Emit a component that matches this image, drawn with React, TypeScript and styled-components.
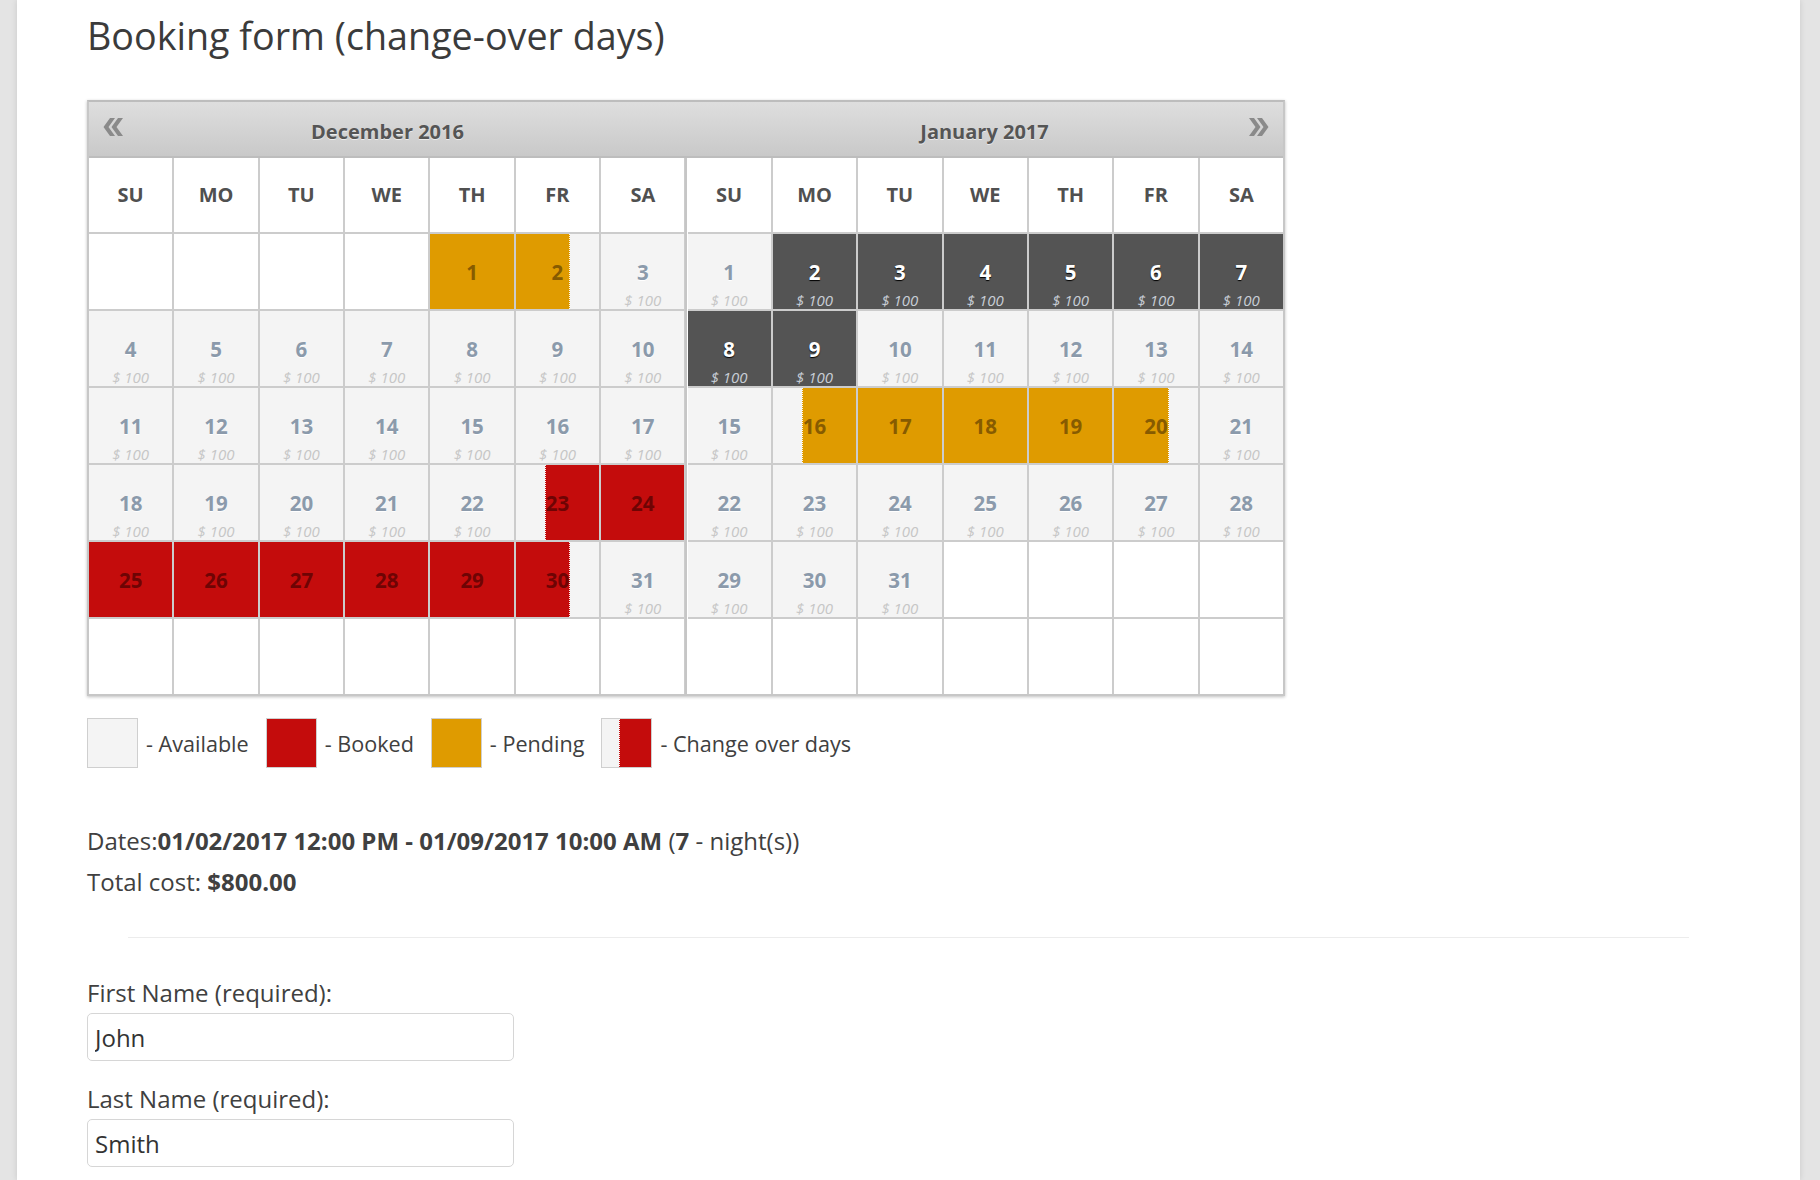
import React from "react";
import styled, { createGlobalStyle } from "styled-components";

type CellKind =
  | "empty"
  | "avail"
  | "pending"
  | "booked"
  | "reserved"
  | "pendingIn"
  | "pendingOut"
  | "bookedIn"
  | "bookedOut";

interface DayData {
  day?: number;
  kind: CellKind;
}

const AVAIL = "#f4f4f4";
const PENDING = "#df9b00";
const BOOKED = "#c40c0c";
const RESERVED = "#545454";

const dotted = (pos: string) =>
  `repeating-linear-gradient(to bottom, rgba(255,255,255,0.95) 0 1px, transparent 1px 2px) ${pos} 0 / 1px 100% no-repeat`;

const backgrounds: Record<CellKind, string> = {
  empty: "#fff",
  avail: AVAIL,
  pending: PENDING,
  booked: BOOKED,
  reserved: RESERVED,
  pendingOut: `${dotted("65%")}, linear-gradient(to right, ${PENDING} 65%, ${AVAIL} 65%)`,
  pendingIn: `${dotted("35%")}, linear-gradient(to right, ${AVAIL} 35%, ${PENDING} 35%)`,
  bookedOut: `${dotted("65%")}, linear-gradient(to right, ${BOOKED} 65%, ${AVAIL} 65%)`,
  bookedIn: `${dotted("35%")}, linear-gradient(to right, ${AVAIL} 35%, ${BOOKED} 35%)`,
};

const numberColors: Record<CellKind, string> = {
  empty: "#8b9aab",
  avail: "#8b9aab",
  pending: "#875b00",
  pendingIn: "#875b00",
  pendingOut: "#875b00",
  booked: "#6e0404",
  bookedIn: "#6e0404",
  bookedOut: "#6e0404",
  reserved: "#ffffff",
};

const GlobalStyle = createGlobalStyle`
  html, body {
    margin: 0;
    padding: 0;
  }
  body {
    background: #e4e4e4;
    font-family: "Open Sans", "Liberation Sans", sans-serif;
    color: #404040;
  }
`;

const Page = styled.div`
  margin: 0 20px 0 17px;
  min-height: 1180px;
  box-sizing: border-box;
  background: #fff;
  box-shadow: 0 0 6px rgba(0, 0, 0, 0.12);
  padding: 12px 70px 0 70px;
`;

const Title = styled.h1`
  margin: 0 0 41px;
  font-size: 37.7px;
  font-weight: 400;
  line-height: 47px;
  color: #3b3b3b;
`;

const Calendar = styled.div`
  width: 1198px;
  box-sizing: border-box;
  border: 2px solid #c7c7c7;
  border-top-color: #bdbdbd;
  box-shadow: 0 1px 3px rgba(0, 0, 0, 0.25);
`;

const CalendarHead = styled.div`
  display: grid;
  grid-template-columns: 1fr 1fr;
  height: 54px;
  background: linear-gradient(to bottom, #dedede, #c9c9c9);
  border-bottom: 2px solid #bdbdbd;
`;

const MonthHead = styled.div`
  display: grid;
  grid-template-columns: 48px 1fr 48px;
  align-items: center;
`;

const MonthTitle = styled.div`
  grid-column: 2;
  text-align: center;
  padding-top: 5px;
  font-size: 20px;
  font-weight: 700;
  color: #555;
  text-shadow: 0 1px 0 rgba(255, 255, 255, 0.6);
`;

const NavButton = styled.div<{ $side: "prev" | "next" }>`
  grid-column: ${(p) => (p.$side === "prev" ? 1 : 3)};
  grid-row: 1;
  justify-self: ${(p) => (p.$side === "prev" ? "start" : "end")};
  margin: ${(p) => (p.$side === "prev" ? "0 0 0 12px" : "0 12px 0 0")};
  display: flex;
  margin-top: -4px;
  cursor: pointer;
`;

const MonthsRow = styled.div`
  display: grid;
  grid-template-columns: 1fr 3px 1fr;
`;

const MonthSeparator = styled.div`
  background: #c6c6c6;
  border-right: 1px solid #fff;
`;

const MonthGrid = styled.div`
  display: grid;
  grid-template-columns: repeat(7, 1fr);
  grid-template-rows: 74px repeat(6, 75px);
  gap: 2px;
  background: #cccccc;
`;

const DayName = styled.div`
  display: flex;
  align-items: center;
  justify-content: center;
  padding-bottom: 1px;
  background: #fff;
  font-size: 20px;
  font-weight: 700;
  color: #505050;
`;

const DayCell = styled.div<{ $kind: CellKind }>`
  display: grid;
  grid-template-rows: 1fr auto 1fr;
  justify-items: center;
  background: ${(p) => backgrounds[p.$kind]};
`;

const DayNumber = styled.span<{ $kind: CellKind }>`
  grid-row: 2;
  font-size: 20.5px;
  font-weight: 700;
  line-height: 26px;
  color: ${(p) => numberColors[p.$kind]};
  text-shadow: ${(p) =>
    p.$kind === "reserved"
      ? "0 1px 1px #000"
      : p.$kind === "avail"
      ? "0 1px 0 #fff"
      : "none"};
`;

const DayPrice = styled.span<{ $dark: boolean }>`
  grid-row: 3;
  align-self: end;
  font-size: 15px;
  font-style: italic;
  line-height: 18px;
  color: ${(p) => (p.$dark ? "#c8ced6" : "#c6c6c6")};
`;

const Legend = styled.div`
  display: flex;
  align-items: center;
  margin-top: 22px;
`;

const Swatch = styled.div<{ $bg: string }>`
  width: 51px;
  height: 50px;
  box-sizing: border-box;
  border: 1px solid #cfcfcf;
  background: ${(p) => p.$bg};
`;

const LegendLabel = styled.span`
  margin: 0 17px 0 8px;
  font-size: 21.6px;
  color: #404040;
`;

const Summary = styled.div`
  margin-top: 52px;
  font-size: 24px;
  line-height: 41px;
  color: #404040;
`;

const Divider = styled.div`
  height: 1px;
  margin: 35px 41px 0;
  background: #ececec;
`;

const Field = styled.div<{ $first?: boolean }>`
  margin-top: ${(p) => (p.$first ? "40px" : "23px")};
`;

const FieldLabel = styled.label`
  display: block;
  font-size: 24px;
  line-height: 30px;
  color: #404040;
`;

const TextInput = styled.input`
  display: block;
  width: 427px;
  height: 48px;
  margin-top: 5px;
  box-sizing: border-box;
  padding: 0 7px;
  border: 1px solid #d6d6d6;
  border-radius: 5px;
  font-family: "Open Sans", "Liberation Sans", sans-serif;
  font-size: 24px;
  color: #333;
  outline: none;
`;

const DAY_NAMES = ["SU", "MO", "TU", "WE", "TH", "FR", "SA"];

function buildMonth(
  startWeekday: number,
  length: number,
  kindOf: (d: number) => CellKind
): DayData[] {
  const cells: DayData[] = [];
  for (let i = 0; i < startWeekday; i++) cells.push({ kind: "empty" });
  for (let d = 1; d <= length; d++) cells.push({ day: d, kind: kindOf(d) });
  while (cells.length < 42) cells.push({ kind: "empty" });
  return cells;
}

const december = buildMonth(4, 31, (d) => {
  if (d === 1) return "pending";
  if (d === 2) return "pendingOut";
  if (d === 23) return "bookedIn";
  if (d >= 24 && d <= 29) return "booked";
  if (d === 30) return "bookedOut";
  return "avail";
});

const january = buildMonth(0, 31, (d) => {
  if (d >= 2 && d <= 9) return "reserved";
  if (d === 16) return "pendingIn";
  if (d >= 17 && d <= 19) return "pending";
  if (d === 20) return "pendingOut";
  return "avail";
});

const Chevrons = ({ dir }: { dir: "left" | "right" }) => (
  <svg
    width="23"
    height="20"
    viewBox="0 0 23 20"
    style={{ transform: dir === "right" ? "scaleX(-1)" : undefined }}
  >
    <path d="M9 1 L14 1 L7.5 10 L14 19 L9 19 L2.5 10 Z" fill="#8a8a8a" />
    <path d="M17 1 L22 1 L15.5 10 L22 19 L17 19 L10.5 10 Z" fill="#8a8a8a" />
  </svg>
);

const Month = ({ cells }: { cells: DayData[] }) => (
  <MonthGrid>
    {DAY_NAMES.map((n) => (
      <DayName key={n}>{n}</DayName>
    ))}
    {cells.map((c, i) => (
      <DayCell key={i} $kind={c.kind}>
        {c.day !== undefined && <DayNumber $kind={c.kind}>{c.day}</DayNumber>}
        {c.day !== undefined && (c.kind === "avail" || c.kind === "reserved") && (
          <DayPrice $dark={c.kind === "reserved"}>$ 100</DayPrice>
        )}
      </DayCell>
    ))}
  </MonthGrid>
);

const legendItems = [
  { bg: AVAIL, label: "- Available" },
  { bg: BOOKED, label: "- Booked" },
  { bg: PENDING, label: "- Pending" },
  { bg: backgrounds.bookedIn, label: "- Change over days" },
];

export default function App() {
  return (
    <>
      <GlobalStyle />
      <Page>
        <Title>Booking form (change-over days)</Title>

        <Calendar>
          <CalendarHead>
            <MonthHead>
              <NavButton $side="prev">
                <Chevrons dir="left" />
              </NavButton>
              <MonthTitle>December 2016</MonthTitle>
            </MonthHead>
            <MonthHead>
              <MonthTitle>January 2017</MonthTitle>
              <NavButton $side="next">
                <Chevrons dir="right" />
              </NavButton>
            </MonthHead>
          </CalendarHead>
          <MonthsRow>
            <Month cells={december} />
            <MonthSeparator />
            <Month cells={january} />
          </MonthsRow>
        </Calendar>

        <Legend>
          {legendItems.map((item) => (
            <React.Fragment key={item.label}>
              <Swatch $bg={item.bg} />
              <LegendLabel>{item.label}</LegendLabel>
            </React.Fragment>
          ))}
        </Legend>

        <Summary>
          <div>
            Dates:<b>01/02/2017 12:00 PM - 01/09/2017 10:00 AM</b> (<b>7</b> - night(s))
          </div>
          <div>
            Total cost: <b>$800.00</b>
          </div>
        </Summary>

        <Divider />

        <Field $first>
          <FieldLabel>First Name (required):</FieldLabel>
          <TextInput defaultValue="John" />
        </Field>
        <Field>
          <FieldLabel>Last Name (required):</FieldLabel>
          <TextInput defaultValue="Smith" />
        </Field>
      </Page>
    </>
  );
}
